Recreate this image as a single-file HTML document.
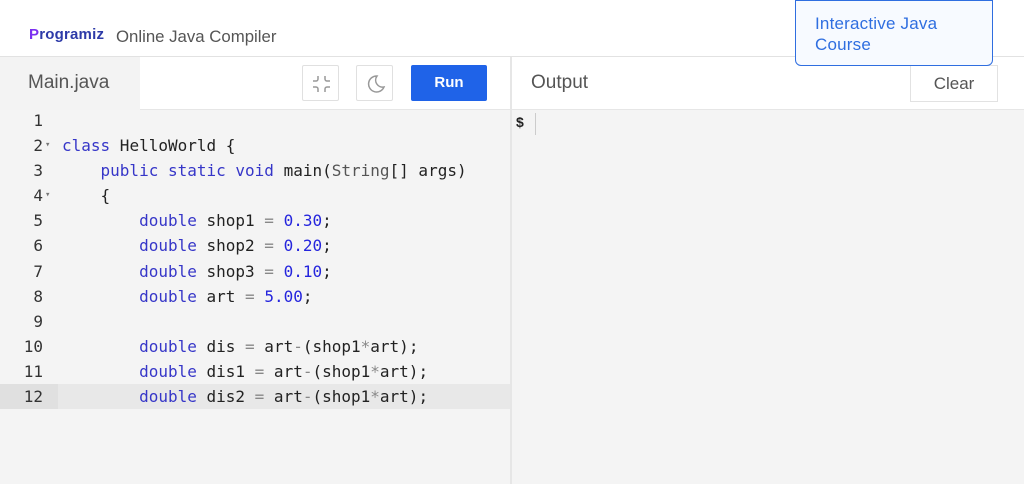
<!DOCTYPE html>
<html><head><style>
*{margin:0;padding:0;box-sizing:border-box}
body{width:1024px;height:484px;overflow:hidden;background:#f4f4f4;font-family:"Liberation Sans",sans-serif;position:relative}
.hdr{position:absolute;left:0;top:0;width:1024px;height:57px;background:#fff;border-bottom:1px solid #e2e2e2}
.logo{position:absolute;left:29px;top:26px;font-weight:bold;font-size:15px;color:#2d3aa8;letter-spacing:0.2px}
.title{position:absolute;left:116px;top:27px;font-size:16.8px;color:#555}
.course{position:absolute;left:795px;top:0;width:198px;height:66px;border:1.5px solid #2f6ee0;border-radius:0 0 6px 6px;background:#f7faff;color:#2f6ee0;font-size:17px;padding:12px 0 0 19px;line-height:21px;z-index:3;letter-spacing:0.2px}
.tab{position:absolute;left:0;top:57px;width:140px;height:53px;background:#f3f3f3;color:#555;font-size:19px;padding:15px 0 0 28px}
.tb{position:absolute;left:140px;top:57px;width:371px;height:53px;background:#fff;border-bottom:1px solid #e6e6e6}
.ib{position:absolute;top:8px;width:37px;height:36px;border:1px solid #e0e0e0;border-radius:2px;background:#fff}
.run{position:absolute;left:271px;top:8px;width:76px;height:36px;background:#1f63e8;color:#fff;font-weight:bold;font-size:15px;text-align:center;line-height:36px;border-radius:2px}
.oh{position:absolute;left:511px;top:57px;width:513px;height:53px;background:#fff;border-bottom:1px solid #e6e6e6}
.oh span{position:absolute;left:20px;top:15px;font-size:19px;color:#555}
.clear{position:absolute;left:399px;top:8px;width:88px;height:37px;border:1px solid #e2e2e2;font-size:17px;color:#555;text-align:center;line-height:36px;background:#fff}
.div{position:absolute;left:510px;top:57px;width:2px;height:427px;background:#e6e6e6}
.code{position:absolute;left:0;top:108px;width:510px;font-family:"DejaVu Sans Mono","Liberation Mono",monospace;font-size:16px}
.l{height:25.1px;line-height:25px;position:relative;white-space:pre;color:#222}
.n{position:absolute;left:0;width:43px;text-align:right;color:#333}
.f{position:absolute;left:45px;color:#777;font-size:9px}
.c{position:absolute;left:62px}
.k{color:#3636c8}.u{color:#2525dd}.o{color:#888}
.hl{background:#e8e8e8}
.hl .g{position:absolute;left:0;top:0;width:58px;height:25px;background:#e0e0e0}
.prompt{position:absolute;left:516px;top:114px;font-weight:bold;font-size:14px;color:#222}
.cur{position:absolute;left:535px;top:113px;width:1px;height:22px;background:#ccc}
</style></head><body>
<div class="hdr"><div class="logo"><span style="color:#7b2ff0">P</span>rogramiz</div><div class="title">Online Java Compiler</div></div>
<div class="course">Interactive Java<br>Course</div>
<div class="tab">Main.java</div>
<div class="tb">
<div class="ib" style="left:162px"><svg width="37" height="36" viewBox="0 0 37 36"><g stroke="#999" stroke-width="1.5" fill="none"><path d="M15 10v3a2 2 0 0 1-2 2h-3M22 10v3a2 2 0 0 0 2 2h3M15 26v-3a2 2 0 0 0-2-2h-3M22 26v-3a2 2 0 0 1 2-2h3"/></g></svg></div>
<div class="ib" style="left:216px"><svg width="37" height="36" viewBox="0 0 37 36"><path d="M20 10a8 8 0 1 0 7 11a7 7 0 0 1-7-11z" stroke="#999" stroke-width="1.5" fill="none"/></svg></div>
<div class="run">Run</div>
</div>
<div class="oh"><span>Output</span><div class="clear">Clear</div></div>
<div class="div"></div>
<div class="code">
<div class="l"><span class="n">1</span></div>
<div class="l"><span class="n">2</span><span class="f">▾</span><span class="c"><span class="k">class</span> HelloWorld {</span></div>
<div class="l"><span class="n">3</span><span class="c">    <span class="k">public</span> <span class="k">static</span> <span class="k">void</span> main(<span style="color:#555">String</span>[] args)</span></div>
<div class="l"><span class="n">4</span><span class="f">▾</span><span class="c">    {</span></div>
<div class="l"><span class="n">5</span><span class="c">        <span class="k">double</span> shop1 <span class="o">=</span> <span class="u">0.30</span>;</span></div>
<div class="l"><span class="n">6</span><span class="c">        <span class="k">double</span> shop2 <span class="o">=</span> <span class="u">0.20</span>;</span></div>
<div class="l"><span class="n">7</span><span class="c">        <span class="k">double</span> shop3 <span class="o">=</span> <span class="u">0.10</span>;</span></div>
<div class="l"><span class="n">8</span><span class="c">        <span class="k">double</span> art <span class="o">=</span> <span class="u">5.00</span>;</span></div>
<div class="l"><span class="n">9</span></div>
<div class="l"><span class="n">10</span><span class="c">        <span class="k">double</span> dis <span class="o">=</span> art<span class="o">-</span>(shop1<span class="o">*</span>art);</span></div>
<div class="l"><span class="n">11</span><span class="c">        <span class="k">double</span> dis1 <span class="o">=</span> art<span class="o">-</span>(shop1<span class="o">*</span>art);</span></div>
<div class="l hl"><span class="g"></span><span class="n">12</span><span class="c">        <span class="k">double</span> dis2 <span class="o">=</span> art<span class="o">-</span>(shop1<span class="o">*</span>art);</span></div>
</div>
<div class="prompt">$</div><div class="cur"></div>
</body></html>
